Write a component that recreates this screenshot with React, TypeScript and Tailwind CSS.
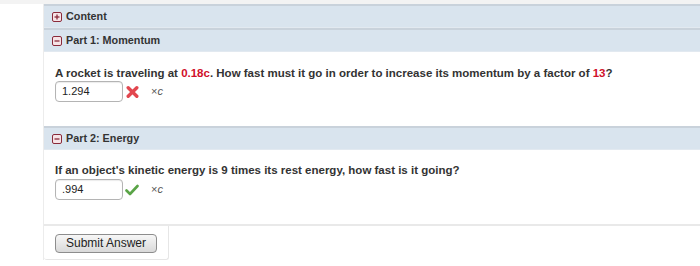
import React from 'react';

function ToggleIcon({ open }: { open: boolean }) {
  return (
    <svg width="10" height="10" viewBox="0 0 10 10" className="shrink-0">
      <rect x="0.5" y="0.5" width="9" height="9" rx="1.5" fill="#f6e3e6" stroke="#8a2a3a" />
      <line x1="2.5" y1="5" x2="7.5" y2="5" stroke="#8a2a3a" strokeWidth="1.3" />
      {!open && <line x1="5" y1="2.5" x2="5" y2="7.5" stroke="#8a2a3a" strokeWidth="1.3" />}
    </svg>
  );
}

function SectionHeader({ title, open }: { title: string; open: boolean }) {
  return (
    <div className="flex h-[24px] items-center gap-[4px] border-t-2 border-b border-t-[#c9d2db] border-b-[#e2e9f0] bg-[#d9e4ee] pl-[8px] text-[10.8px] font-bold text-[#333]">
      <ToggleIcon open={open} />
      <span>{title}</span>
    </div>
  );
}

function WrongMark() {
  return (
    <svg width="13" height="12" viewBox="0 0 13 12">
      <path d="M2.2 1.8 L10.8 10.2 M10.8 1.8 L2.2 10.2" stroke="#e2474f" strokeWidth="3.4" strokeLinecap="round" />
    </svg>
  );
}

function RightMark() {
  return (
    <svg width="14" height="12" viewBox="0 0 14 12">
      <path d="M1.5 6.5 L5 10 L12.5 2" fill="none" stroke="#5aa447" strokeWidth="2.6" strokeLinecap="round" strokeLinejoin="round" />
    </svg>
  );
}

function AnswerRow({ value, correct }: { value: string; correct: boolean }) {
  return (
    <div className="flex items-center">
      <div className="flex h-[21px] w-[68px] items-center rounded-[4px] border border-[#b4b4b4] bg-white pl-[6px] text-[11px] text-[#222] shadow-[inset_0_1px_1px_rgba(0,0,0,0.08)]">
        {value}
      </div>
      <div className="ml-[2px] flex w-[14px] justify-center">{correct ? <RightMark /> : <WrongMark />}</div>
      <span className="ml-[12px] text-[11px] text-[#555]">
        ×<i>c</i>
      </span>
    </div>
  );
}

export default function App() {
  return (
    <div className="h-[266px] w-[700px] overflow-hidden bg-white font-['Liberation_Sans',Arial,sans-serif]">
      {/* top strip */}
      <div className="h-[4px] bg-[#f3f3f3]" />

      <div className="ml-[43px] border-l border-[#ececec]">
        <SectionHeader title="Content" open={false} />
        <SectionHeader title="Part 1: Momentum" open={true} />

        {/* Part 1 body */}
        <div className="h-[74px] pl-[11px] pt-[15px]">
          <p className="text-[11.5px] font-bold leading-[13px] text-[#333]">
            A rocket is traveling at <span className="text-[#d0102a]">0.18c</span>. How fast must it go in order to increase its
            momentum by a factor of <span className="text-[#d0102a]">13</span>?
          </p>
          <div className="mt-[1px]">
            <AnswerRow value="1.294" correct={false} />
          </div>
        </div>

        <SectionHeader title="Part 2: Energy" open={true} />

        {/* Part 2 body */}
        <div className="h-[74px] pl-[11px] pt-[14px]">
          <p className="text-[11.5px] font-bold leading-[13px] text-[#333]">
            If an object's kinetic energy is 9 times its rest energy, how fast is it going?
          </p>
          <div className="mt-[2px]">
            <AnswerRow value=".994" correct={true} />
          </div>
        </div>

        <div className="h-[2px] bg-[#e9e9e9]" />

        {/* submit box */}
        <div className="flex h-[34px] w-[125px] items-start rounded-b-[3px] border-r border-b border-[#e6e6e6] pl-[11px] pt-[8px]">
          <button className="h-[19px] rounded-[4px] border border-[#8d8d8d] bg-gradient-to-b from-[#f7f7f7] to-[#d9d9d9] px-[10px] text-[12px] leading-[17px] text-[#222]">
            Submit Answer
          </button>
        </div>
      </div>
    </div>
  );
}
